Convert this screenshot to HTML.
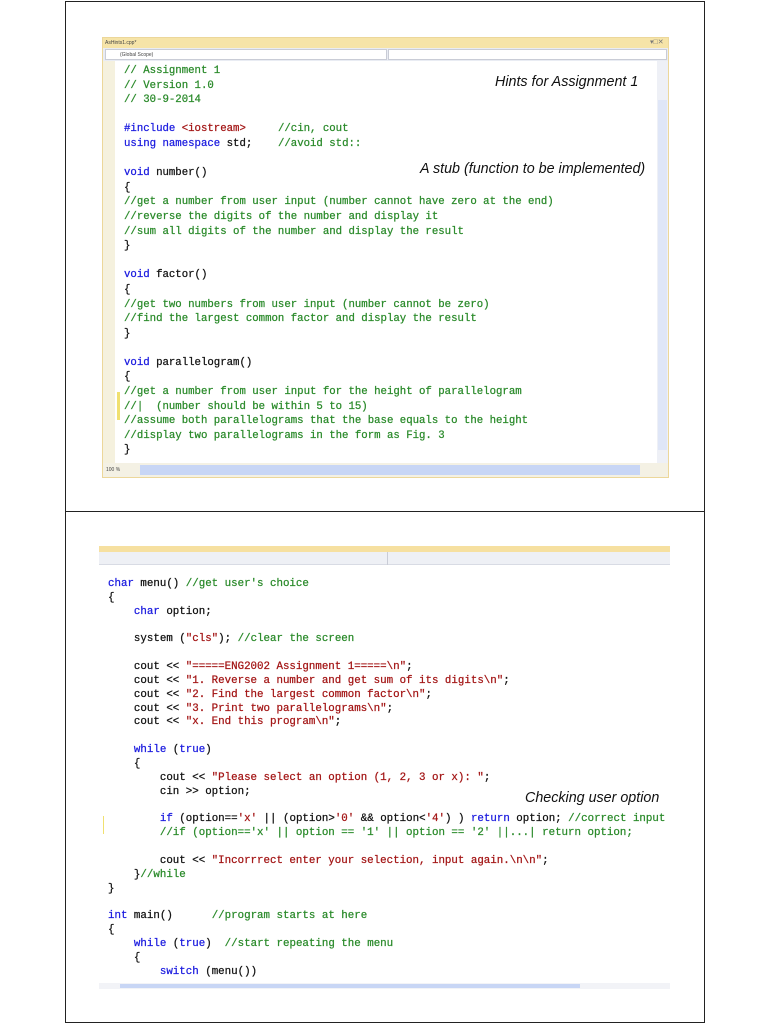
<!DOCTYPE html>
<html><head><meta charset="utf-8"><style>
*{margin:0;padding:0;box-sizing:border-box}
body{width:768px;height:1024px;background:#fff;position:relative;overflow:hidden;font-family:"Liberation Sans",sans-serif}
.abs{position:absolute}
pre{position:absolute;font-family:"Liberation Mono",monospace;white-space:pre;color:#111}
.s1{-webkit-text-stroke:0.25px currentColor}
.g{color:#2a8a2a}.b{color:#1a1adf}.r{color:#a31515}.p{color:#555}
.note{position:absolute;font-style:italic;font-size:14.3px;color:#111;white-space:nowrap}
</style></head><body>
<div class="abs" style="left:65px;top:1px;width:640px;height:1022px;border:1px solid #222"></div>
<div class="abs" style="left:65px;top:511px;width:640px;height:1px;background:#222"></div>

<div class="abs" style="left:102px;top:37px;width:567px;height:441px;border:1px solid #ecd79a;background:#fff"></div>
<div class="abs" style="left:103px;top:38px;width:565px;height:10px;background:#f6e4a8;font-size:5px;color:#444;padding-left:2px;line-height:10px">AsHints1.cpp*</div>
<div class="abs" style="left:650px;top:38px;font-size:7px;color:#777;line-height:10px">▾□✕</div>
<div class="abs" style="left:103px;top:48px;width:565px;height:13px;background:#e9ecf3"></div>
<div class="abs" style="left:105px;top:49px;width:282px;height:11px;background:#fff;border:1px solid #c9ccd6;font-size:5px;color:#444;padding-left:14px;line-height:10px">(Global Scope)</div>
<div class="abs" style="left:388px;top:49px;width:279px;height:11px;background:#fff;border:1px solid #c9ccd6"></div>
<div class="abs" style="left:103px;top:61px;width:12px;height:402px;background:#f5f1de"></div>
<div class="abs" style="left:657px;top:61px;width:11px;height:402px;background:#eef0f6"></div>
<div class="abs" style="left:658px;top:100px;width:9px;height:350px;background:#dfe6f7"></div>
<div class="abs" style="left:103px;top:463px;width:565px;height:14px;background:#f4f1e4"></div>
<div class="abs" style="left:140px;top:465px;width:500px;height:10px;background:#c8d6f5"></div>
<div class="abs" style="left:106px;top:464px;font-size:5px;color:#444;line-height:12px">100 %</div>
<div class="abs" style="left:117px;top:392px;width:3px;height:28px;background:#f0e070"></div>
<pre class="s1" style="left:124px;top:64px;font-size:10.7px;line-height:14.6px"><span class="g">// Assignment 1
// Version 1.0
// 30-9-2014</span>

<span class="b">#include</span> <span class="r">&lt;iostream&gt;</span>     <span class="g">//cin, cout</span>
<span class="b">using namespace</span> std;    <span class="g">//avoid std::</span>

<span class="b">void</span> number()
{
<span class="g">//get a number from user input (number cannot have zero at the end)
//reverse the digits of the number and display it
//sum all digits of the number and display the result</span>
}

<span class="b">void</span> factor()
{
<span class="g">//get two numbers from user input (number cannot be zero)
//find the largest common factor and display the result</span>
}

<span class="b">void</span> parallelogram()
{
<span class="g">//get a number from user input for the height of parallelogram
//|  (number should be within 5 to 15)
//assume both parallelograms that the base equals to the height
//display two parallelograms in the form as Fig. 3</span>
}</pre>
<div class="note" style="left:495px;top:74px">Hints for Assignment 1</div>
<div class="note" style="left:420px;top:161px">A stub (function to be implemented)</div>

<div class="abs" style="left:99px;top:546px;width:571px;height:6px;background:#f6e0a0"></div>
<div class="abs" style="left:99px;top:552px;width:571px;height:13px;background:#eef0f5;border-bottom:1px solid #d8dbe4"></div>
<div class="abs" style="left:387px;top:552px;width:1px;height:13px;background:#c9ccd6"></div>
<div class="abs" style="left:99px;top:983px;width:571px;height:6px;background:#f2f3f7"></div>
<div class="abs" style="left:120px;top:984px;width:460px;height:4px;background:#c8d6f5"></div>
<div class="abs" style="left:103px;top:816px;width:1px;height:18px;background:#f0e070"></div>
<pre class="s1" style="left:108px;top:578px;font-size:10.8px;line-height:13.85px"><span class="b">char</span> menu() <span class="g">//get user's choice</span>
{
    <span class="b">char</span> option;

    system (<span class="r">"cls"</span>); <span class="g">//clear the screen</span>

    cout &lt;&lt; <span class="r">"=====ENG2002 Assignment 1=====\n"</span>;
    cout &lt;&lt; <span class="r">"1. Reverse a number and get sum of its digits\n"</span>;
    cout &lt;&lt; <span class="r">"2. Find the largest common factor\n"</span>;
    cout &lt;&lt; <span class="r">"3. Print two parallelograms\n"</span>;
    cout &lt;&lt; <span class="r">"x. End this program\n"</span>;

    <span class="b">while</span> (<span class="b">true</span>)
    {
        cout &lt;&lt; <span class="r">"Please select an option (1, 2, 3 or x): "</span>;
        cin &gt;&gt; option;

        <span class="b">if</span> (option==<span class="r">'x'</span> || (option&gt;<span class="r">'0'</span> &amp;&amp; option&lt;<span class="r">'4'</span>) ) <span class="b">return</span> option; <span class="g">//correct input</span>
        <span class="g">//if (option=='x' || option == '1' || option == '2' ||...| return option;</span>

        cout &lt;&lt; <span class="r">"Incorrrect enter your selection, input again.\n\n"</span>;
    }<span class="g">//while</span>
}

<span class="b">int</span> main()      <span class="g">//program starts at here</span>
{
    <span class="b">while</span> (<span class="b">true</span>)  <span class="g">//start repeating the menu</span>
    {
        <span class="b">switch</span> (menu())</pre>
<div class="note" style="left:525px;top:790px">Checking user option</div>
</body></html>
